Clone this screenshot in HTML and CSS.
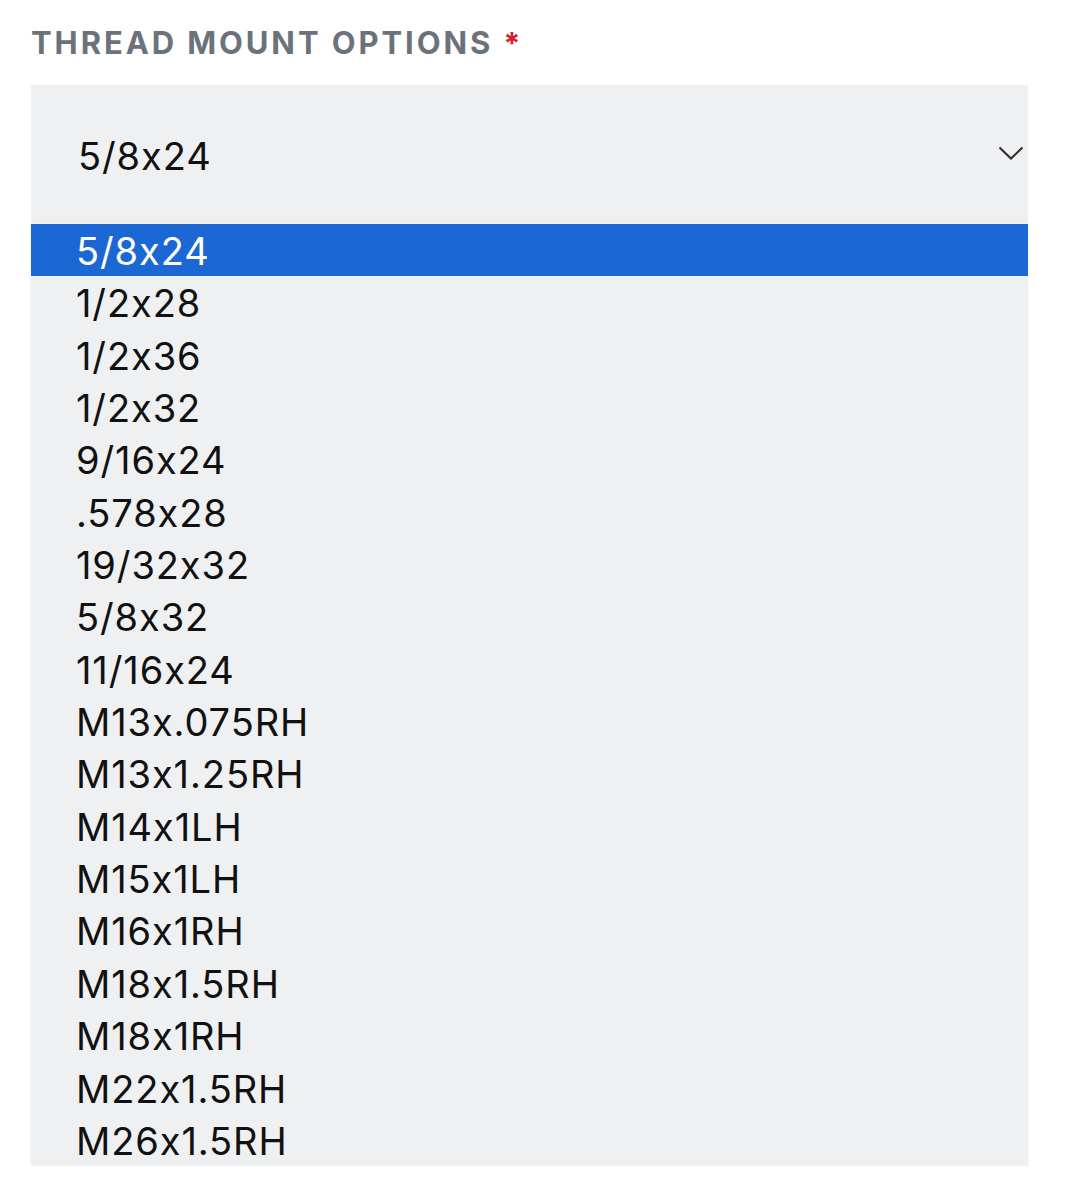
FILE: index.html
```html
<!DOCTYPE html>
<html>
<head>
<meta charset="utf-8">
<link rel="stylesheet" href="styles.css">
</head>
<body>
<div class="field">
  <div class="label">THREAD MOUNT OPTIONS <span class="req">*</span></div>
  <div class="select">
    <span class="value">5/8x24</span>
    <svg class="chev" width="26" height="16" viewBox="0 0 26 16"><path d="M1.5 2.5 L13 13.5 L24.5 2.5" fill="none" stroke="#2b2b2b" stroke-width="2"/></svg>
  </div>
  <ul class="list">
    <li class="sel">5/8x24</li>
    <li>1/2x28</li>
    <li>1/2x36</li>
    <li>1/2x32</li>
    <li>9/16x24</li>
    <li>.578x28</li>
    <li>19/32x32</li>
    <li>5/8x32</li>
    <li>11/16x24</li>
    <li>M13x.075RH</li>
    <li>M13x1.25RH</li>
    <li>M14x1LH</li>
    <li>M15x1LH</li>
    <li>M16x1RH</li>
    <li>M18x1.5RH</li>
    <li>M18x1RH</li>
    <li>M22x1.5RH</li>
    <li>M26x1.5RH</li>
  </ul>
</div>
</body>
</html>
```

FILE: styles.css
```css
html, body { margin: 0; padding: 0; background: #fff; }
body { font-family: Inter, "Noto Sans", sans-serif; font-feature-settings: "calt" 0; }
.field { padding: 24px 0 0 31px; width: 997px; }
.label {
  font-size: 31px; font-weight: 700; color: #6b727c;
  letter-spacing: 2.9px; line-height: 38px; height: 38px;
}
.req { color: #d3202a; font-size: 30px; }
.select {
  margin-top: 23px; height: 137px; background: #eff0f2;
  display: flex; align-items: center; justify-content: space-between;
  padding: 0 4px 0 47px; box-sizing: border-box;
}
.value { font-size: 38px; letter-spacing: 0.9px; color: #111; padding-top: 4px; }
.chev { margin-bottom: 2px; }
.list {
  list-style: none; margin: 2px 0 0 0; padding: 0; background: #eff0f2;
  box-shadow: 0 -2px 3px rgba(0,0,0,0.08);
}
.list li {
  height: 52.35px; line-height: 54px; font-size: 38px; letter-spacing: 0.9px; color: #111;
  padding-left: 45px;
}
.list li.sel { background: #1b67d4; color: #fff; }
```
